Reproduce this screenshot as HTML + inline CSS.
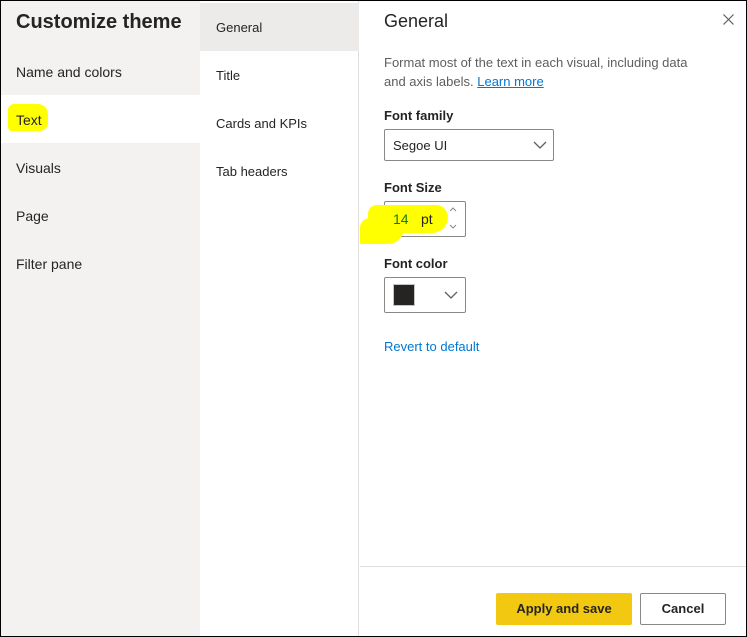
<!DOCTYPE html>
<html><head><style>
*{margin:0;padding:0;box-sizing:border-box}
body{width:747px;height:637px;overflow:hidden;font-family:"Liberation Sans",sans-serif;color:#252423;background:#fff;position:relative}
.frame{position:absolute;left:0;top:0;width:747px;height:637px;border:1px solid #000;z-index:10;pointer-events:none}
.left{position:absolute;left:0;top:0;width:200px;height:637px;background:#f3f2f1}
.mid{position:absolute;left:200px;top:0;width:159px;height:637px;background:#fff;border-right:1px solid #e1dfdd}
.a{position:absolute;font-size:14px}
.hl{position:absolute;background:#ffff00}
.box{position:absolute;border:1px solid #8a8886;border-radius:2px;background:#fff}
</style></head><body>
<div class="left"></div>
<div class="hl" style="left:0;top:95px;width:200px;height:48px;background:#fff"></div>
<div class="hl" style="left:8px;top:104px;width:40px;height:27px;border-radius:6px 10px 8px 4px"></div>
<div class="a" style="left:16px;top:11px;font-size:20px;font-weight:bold;color:#252423">Customize theme</div>
<div class="a" style="left:16px;top:64px">Name and colors</div>
<div class="a" style="left:16px;top:112px">Text</div>
<div class="a" style="left:16px;top:160px">Visuals</div>
<div class="a" style="left:16px;top:208px">Page</div>
<div class="a" style="left:16px;top:256px">Filter pane</div>
<div class="mid"></div>
<div style="position:absolute;left:200px;top:3px;width:159px;height:48px;background:#edebe9"></div>
<div class="a" style="left:216px;top:20px;font-size:13px">General</div>
<div class="a" style="left:216px;top:68px;font-size:13px">Title</div>
<div class="a" style="left:216px;top:116px;font-size:13px">Cards and KPIs</div>
<div class="a" style="left:216px;top:164px;font-size:13px">Tab headers</div>
<div class="a" style="left:384px;top:11px;font-size:18px">General</div>
<svg style="position:absolute;left:723px;top:14px" width="11" height="11"><path d="M0.5 0.5l10 10M10.5 0.5l-10 10" stroke="#605e5c" stroke-width="1.2"/></svg>
<div class="a" style="left:384px;top:53px;font-size:13px;line-height:19px;color:#605e5c;width:345px">Format most of the text in each visual, including data<br>and axis labels. <span style="color:#0078d4;text-decoration:underline">Learn more</span></div>
<div class="a" style="left:384px;top:108px;font-size:13px;font-weight:bold">Font family</div>
<div class="box" style="left:384px;top:129px;width:170px;height:32px"></div>
<div class="a" style="left:393px;top:138px;font-size:13px">Segoe UI</div>
<svg style="position:absolute;left:533px;top:141px" width="14" height="9"><path d="M1 1l6 6 6-6" fill="none" stroke="#605e5c" stroke-width="1.3"/></svg>
<div class="a" style="left:384px;top:180px;font-size:13px;font-weight:bold">Font Size</div>
<div class="box" style="left:384px;top:201px;width:82px;height:36px"></div>
<div class="hl" style="left:368px;top:205px;width:80px;height:28px;border-radius:10px 14px 18px 8px"></div>
<div class="hl" style="left:360px;top:218px;width:44px;height:26px;border-radius:10px 0 16px 2px"></div>
<div class="a" style="left:393px;top:211px;font-size:14px;color:#107c10">14</div>
<div class="a" style="left:421px;top:211px;font-size:14px">pt</div>
<svg style="position:absolute;left:448px;top:205px" width="10" height="26"><path d="M2 6l3-3 3 3M2 20l3 3 3-3" fill="none" stroke="#8a8886" stroke-width="1"/></svg>
<div class="a" style="left:384px;top:256px;font-size:13px;font-weight:bold">Font color</div>
<div class="box" style="left:384px;top:277px;width:82px;height:36px"></div>
<div style="position:absolute;left:393px;top:284px;width:22px;height:22px;background:#252423;border:1px solid #c8c6c4"></div>
<svg style="position:absolute;left:444px;top:291px" width="14" height="9"><path d="M1 1l6 6 6-6" fill="none" stroke="#605e5c" stroke-width="1.3"/></svg>
<div class="a" style="left:384px;top:339px;font-size:13px;color:#0078d4">Revert to default</div>
<div style="position:absolute;left:360px;top:566px;width:387px;height:1px;background:#e1dfdd"></div>
<div style="position:absolute;left:496px;top:593px;width:136px;height:32px;background:#f2c811;border-radius:2px;font-size:13px;font-weight:bold;text-align:center;line-height:32px">Apply and save</div>
<div style="position:absolute;left:640px;top:593px;width:86px;height:32px;border:1px solid #8a8886;border-radius:2px;font-size:13px;font-weight:bold;text-align:center;line-height:30px">Cancel</div>
<div class="frame"></div>
</body></html>
